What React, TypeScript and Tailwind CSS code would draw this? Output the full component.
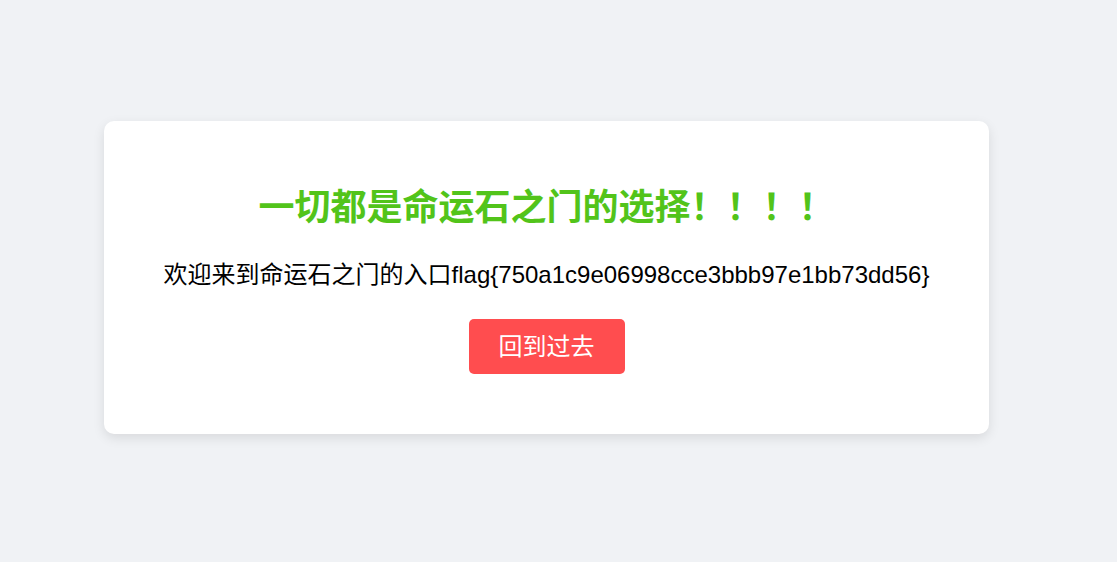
export default function App() {
  return (
    <div
      className="min-h-screen bg-[#f0f2f5] flex items-center justify-center"
      style={{ fontFamily: '"Liberation Sans", "Noto Sans CJK SC", sans-serif' }}
    >
      <div className="mr-[24px] mb-[7px] w-[885px] h-[313px] bg-white rounded-[10px] shadow-[0_4px_12px_rgba(0,0,0,0.1)] flex flex-col items-center pt-[63px]">
        <h1 className="text-[36px] leading-[48px] font-bold text-[#52c41a]">一切都是命运石之门的选择！！！！</h1>
        <p className="mt-[28px] text-[24px] leading-[30px] text-black">欢迎来到命运石之门的入口flag{'{'}750a1c9e06998cce3bbb97e1bb73dd56{'}'}</p>
        <button className="mt-[29px] w-[156px] h-[55px] rounded-[5px] bg-[#ff4d4f] text-white text-[24px]">回到过去</button>
      </div>
    </div>
  );
}
